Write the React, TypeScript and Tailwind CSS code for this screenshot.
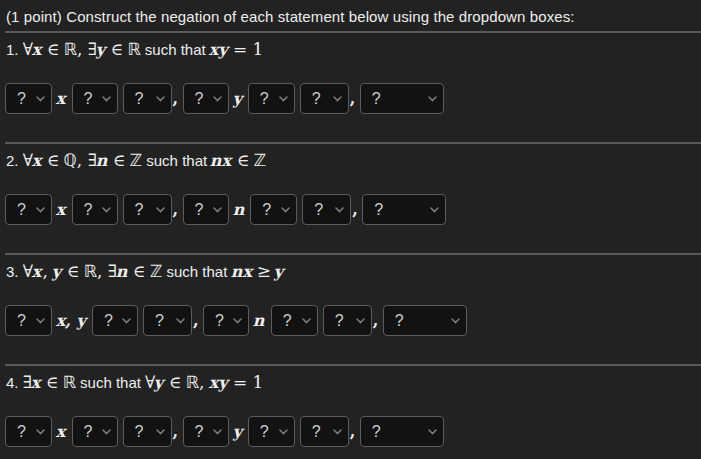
const sans = { fontFamily: '"Liberation Sans", Arial, sans-serif' };

type Item =
  | { t: 's'; w: number }
  | { t: 'v'; text: string }
  | { t: 'c' };

const W = [47, 46, 49, 46, 47, 49, 84];

function row(a: string, b: string): Item[] {
  return [
    { t: 's', w: W[0] },
    { t: 'v', text: a },
    { t: 's', w: W[1] },
    { t: 's', w: W[2] },
    { t: 'c' },
    { t: 's', w: W[3] },
    { t: 'v', text: b },
    { t: 's', w: W[4] },
    { t: 's', w: W[5] },
    { t: 'c' },
    { t: 's', w: W[6] },
  ];
}

function Chevron() {
  return (
    <svg width="9" height="6" viewBox="0 0 9 6" className="shrink-0">
      <polyline points="1,1 4.5,4.5 8,1" fill="none" stroke="#7a7a7a" strokeWidth="1.6" strokeLinecap="round" />
    </svg>
  );
}

function Select({ w }: { w: number }) {
  return (
    <div
      className="flex h-[31px] items-center justify-between rounded-[4px] border border-[#5c5c5c] bg-[#121212] pl-[11px] pr-[6px] text-[16px] text-[#cfcfcf]"
      style={{ width: w }}
    >
      <span>?</span>
      <Chevron />
    </div>
  );
}

// upright math symbols
function M({ children }: { children: React.ReactNode }) {
  return <span className="font-['DejaVu_Serif',serif] text-[17px]">{children}</span>;
}

// bold italic variables (slanted by hand, no italic face installed)
function V({ children }: { children: React.ReactNode }) {
  return (
    <span className="inline-block -skew-x-[14deg] font-['DejaVu_Serif',serif] text-[16px] font-bold">{children}</span>
  );
}

function Bb({ children }: { children: React.ReactNode }) {
  return <span className="font-['DejaVu_Sans',sans-serif] text-[17px]">{children}</span>;
}

function Row({ items }: { items: Item[] }) {
  return (
    <div className="mt-[16px] flex h-[31px] items-center gap-[5px]">
      {items.map((it, i) => {
        if (it.t === 's') return <Select key={i} w={it.w} />;
        if (it.t === 'c')
          return (
            <span key={i} className="-ml-[4px] mr-[1px] w-[4px] font-['DejaVu_Serif',serif] text-[16px] font-bold text-[#eee]">
              ,
            </span>
          );
        return (
          <span
            key={i}
            className="inline-block -skew-x-[14deg] whitespace-pre font-['DejaVu_Serif',serif] text-[16px] font-bold text-[#eee]"
          >
            {it.text}
          </span>
        );
      })}
    </div>
  );
}

function Section({ statement, items }: { statement: React.ReactNode; items: Item[] }) {
  return (
    <div className="border-t-2 border-[#595959] pb-[28px]">
      <div className="flex h-[34px] items-center pl-px text-[15px] text-[#eee]">{statement}</div>
      <Row items={items} />
    </div>
  );
}

export default function App() {
  return (
    <div className="h-[459px] w-[701px] overflow-hidden bg-[#222222] pl-[5px] text-[#eee]" style={sans}>
      <div className="h-[31px] pt-[8px] pl-px text-[15px] leading-[18px] tracking-[0.1px]">
        (1 point) Construct the negation of each statement below using the dropdown boxes:
      </div>
      <Section
        statement={
          <span className="whitespace-pre">
            1. <M>∀</M><V>x</V> <M>∈</M> <Bb>ℝ</Bb><M>, ∃</M><V>y</V> <M>∈</M> <Bb>ℝ</Bb> such that <V>xy</V> <M>= 1</M>
          </span>
        }
        items={row('x', 'y')}
      />
      <Section
        statement={
          <span className="whitespace-pre">
            2. <M>∀</M><V>x</V> <M>∈</M> <Bb>ℚ</Bb><M>, ∃</M><V>n</V> <M>∈</M> <Bb>ℤ</Bb> such that <V>nx</V> <M>∈</M> <Bb>ℤ</Bb>
          </span>
        }
        items={row('x', 'n')}
      />
      <Section
        statement={
          <span className="whitespace-pre">
            3. <M>∀</M><V>x</V><M>, </M><V>y</V> <M>∈</M> <Bb>ℝ</Bb><M>, ∃</M><V>n</V> <M>∈</M> <Bb>ℤ</Bb> such that <V>nx</V> <M>≥</M> <V>y</V>
          </span>
        }
        items={row('x, y', 'n')}
      />
      <Section
        statement={
          <span className="whitespace-pre">
            4. <M>∃</M><V>x</V> <M>∈</M> <Bb>ℝ</Bb> such that <M>∀</M><V>y</V> <M>∈</M> <Bb>ℝ</Bb><M>, </M><V>xy</V> <M>= 1</M>
          </span>
        }
        items={row('x', 'y')}
      />
    </div>
  );
}
